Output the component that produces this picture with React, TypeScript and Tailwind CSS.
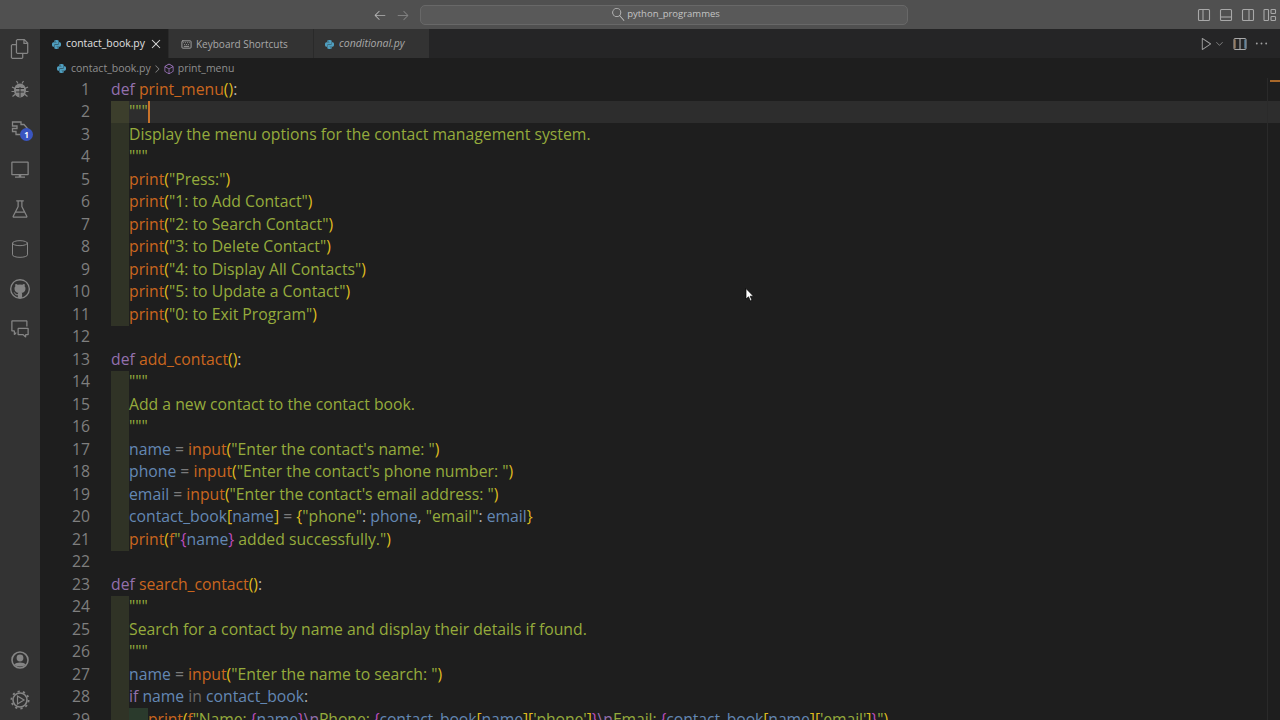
import {
  VscArrowLeft,
  VscArrowRight,
  VscChevronDown,
  VscChevronRight,
  VscClose,
  VscCommentDiscussion,
  VscEllipsis,
  VscFiles,
  VscGithub,
  VscPlay,
  VscSearch,
  VscSymbolMethod,
  VscVm,
  VscBeaker,
} from "react-icons/vsc";
import { Cylinder, Keyboard } from "lucide-react";
import { SiPython } from "react-icons/si";
import type { ReactNode } from "react";

// token colours: k=keyword f=function y=bracket s=string v=variable o=operator p=plain m=brace
const colors: Record<string, string> = {
  k: "text-[#9370ad]",
  f: "text-[#ca661e]",
  y: "text-[#dfbb1e]",
  s: "text-[#95ab3c]",
  v: "text-[#6488b4]",
  o: "text-[#7a7a7a]",
  p: "text-[#b4b4b4]",
  m: "text-[#bf4dbf]",
  g: "text-[#6a6a6a]",
};

type Tok = [string, string];

const print = (text: string): Tok[] => [["print", "f"], ["(", "y"], [text, "s"], [")", "y"]];
const docQuote: Tok[] = [['"""', "s"]];

const lines: { indent: number; toks: Tok[] }[] = [
  { indent: 0, toks: [["def ", "k"], ["print_menu", "f"], ["()", "y"], [":", "p"]] },
  { indent: 1, toks: docQuote },
  { indent: 1, toks: [["Display the menu options for the contact management system.", "s"]] },
  { indent: 1, toks: docQuote },
  { indent: 1, toks: print('"Press:"') },
  { indent: 1, toks: print('"1: to Add Contact"') },
  { indent: 1, toks: print('"2: to Search Contact"') },
  { indent: 1, toks: print('"3: to Delete Contact"') },
  { indent: 1, toks: print('"4: to Display All Contacts"') },
  { indent: 1, toks: print('"5: to Update a Contact"') },
  { indent: 1, toks: print('"0: to Exit Program"') },
  { indent: -1, toks: [] },
  { indent: 0, toks: [["def ", "k"], ["add_contact", "f"], ["()", "y"], [":", "p"]] },
  { indent: 1, toks: docQuote },
  { indent: 1, toks: [["Add a new contact to the contact book.", "s"]] },
  { indent: 1, toks: docQuote },
  { indent: 1, toks: [["name", "v"], [" = ", "o"], ["input", "f"], ["(", "y"], [`"Enter the contact's name: "`, "s"], [")", "y"]] },
  { indent: 1, toks: [["phone", "v"], [" = ", "o"], ["input", "f"], ["(", "y"], [`"Enter the contact's phone number: "`, "s"], [")", "y"]] },
  { indent: 1, toks: [["email", "v"], [" = ", "o"], ["input", "f"], ["(", "y"], [`"Enter the contact's email address: "`, "s"], [")", "y"]] },
  {
    indent: 1,
    toks: [
      ["contact_book", "v"], ["[", "y"], ["name", "v"], ["]", "y"], [" = ", "o"], ["{", "y"],
      ['"phone"', "s"], [": ", "p"], ["phone", "v"], [", ", "p"], ['"email"', "s"], [": ", "p"], ["email", "v"], ["}", "y"],
    ],
  },
  {
    indent: 1,
    toks: [
      ["print", "f"], ["(", "y"], ["f", "f"], ['"', "s"], ["{", "m"], ["name", "v"], ["}", "m"],
      [' added successfully."', "s"], [")", "y"],
    ],
  },
  { indent: -1, toks: [] },
  { indent: 0, toks: [["def ", "k"], ["search_contact", "f"], ["()", "y"], [":", "p"]] },
  { indent: 1, toks: docQuote },
  { indent: 1, toks: [["Search for a contact by name and display their details if found.", "s"]] },
  { indent: 1, toks: docQuote },
  { indent: 1, toks: [["name", "v"], [" = ", "o"], ["input", "f"], ["(", "y"], ['"Enter the name to search: "', "s"], [")", "y"]] },
  { indent: 1, toks: [["if ", "k"], ["name", "v"], [" in ", "g"], ["contact_book", "v"], [":", "p"]] },
  {
    indent: 2,
    toks: [
      ["print", "f"], ["(", "y"], ["f", "f"], ['"Name: ', "s"], ["{", "m"], ["name", "v"], ["}", "m"], ["\\n", "k"],
      ["Phone: ", "s"], ["{", "m"], ["contact_book", "v"], ["[", "y"], ["name", "v"], ["]", "y"], ["[", "y"], ["'phone'", "s"], ["]", "y"], ["}", "m"], ["\\n", "k"],
      ["Email: ", "s"], ["{", "m"], ["contact_book", "v"], ["[", "y"], ["name", "v"], ["]", "y"], ["[", "y"], ["'email'", "s"], ["]", "y"], ["}", "m"], ['"', "s"], [")", "y"],
    ],
  },
];

function PyIcon({ className }: { className?: string }) {
  return <SiPython className={className} />;
}

function CodeLine({ n, indent, toks }: { n: number; indent: number; toks: Tok[] }) {
  const active = n === 2;
  return (
    <div className="flex h-[22.5px] items-center">
      <span className="w-[50px] shrink-0 text-right text-[#7f7f7f]">{n}</span>
      <span className="w-[21px] shrink-0" />
      {indent >= 1 && <span className={`h-full w-[18px] shrink-0 ${active ? "bg-[#3c3e2c]" : "bg-[#303326]"}`} />}
      {indent >= 2 && <span className="h-full w-[19px] shrink-0 bg-[#2a3a2c]" />}
      <div className={`flex h-full flex-1 items-center whitespace-pre ${active ? "bg-[#2d2d2d]" : ""} ${n === 29 ? "tracking-[-0.09px]" : ""}`}>
        <span>
          {toks.map((t, i) => (
            <span key={i} className={colors[t[1]]}>
              {t[0]}
            </span>
          ))}
        </span>
        {active && <span className="h-full w-[2px] bg-[#c9732a]" />}
      </div>
    </div>
  );
}

function SplitIcon() {
  return (
    <svg width="14" height="14" viewBox="0 0 14 14" fill="none">
      <rect x="1" y="1.5" width="12" height="11" rx="1" stroke="#a9a9a9" />
      <path d="M7 1.5 V12.5" stroke="#b9b9b9" />
      <path d="M2 2.5 V11.5" stroke="#c79a6a" />
      <path d="M12 2.5 V11.5" stroke="#6aa6d0" />
    </svg>
  );
}

function Layout({ children }: { children: ReactNode }) {
  return (
    <svg width="14" height="14" viewBox="0 0 14 14" fill="none" stroke="#a8a8a8" strokeWidth="1.1">
      {children}
    </svg>
  );
}

function ExtensionsIcon() {
  return (
    <svg width="20" height="20" viewBox="0 0 20 20" fill="none" stroke="currentColor" strokeWidth="1.3">
      <path d="M2.5 3 H11 V5.5 H14 L17.5 9.5 V15.5 H6 V12.5 H2.5 V9.5 H7 V7 H2.5 Z" />
    </svg>
  );
}

function BugIcon() {
  return (
    <svg width="20" height="20" viewBox="0 0 20 20" fill="none" stroke="currentColor" strokeWidth="1.2">
      <path d="M6.5 2 L8 4.5 M13.5 2 L12 4.5 M2 8 L5 9.5 M18 8 L15 9.5 M1.5 12.5 H4.5 M18.5 12.5 H15.5 M2.5 17.5 L5.5 15 M17.5 17.5 L14.5 15" />
      <ellipse cx="10" cy="11.5" rx="6" ry="7" fill="currentColor" stroke="none" />
      <path d="M10 8 V18 M6 9.5 H14 M6 13 H14" stroke="#333333" strokeWidth="1" />
    </svg>
  );
}

function AccountIcon() {
  return (
    <svg width="20" height="20" viewBox="0 0 20 20" fill="none">
      <circle cx="10" cy="10" r="8" stroke="currentColor" strokeWidth="1.6" />
      <circle cx="10" cy="8" r="3.4" fill="currentColor" />
      <path d="M4.2 14.5 C6 11.8 14 11.8 15.8 14.5 C14 17 6 17 4.2 14.5 Z" fill="currentColor" />
    </svg>
  );
}

function GearIcon() {
  return (
    <svg width="20" height="20" viewBox="0 0 20 20" fill="none" stroke="currentColor">
      <circle cx="10" cy="10" r="7" strokeWidth="1.6" />
      <circle cx="10" cy="10" r="8.6" strokeWidth="1.8" strokeDasharray="2.2 3.2" />
      <path d="M7.5 6 L14 10 L7.5 14 Z" strokeWidth="1.2" />
    </svg>
  );
}

const activityTop = [
  <VscFiles key="files" />,
  <BugIcon key="bug" />,
  <div key="ext" className="relative">
    <ExtensionsIcon />
    <span className="absolute -right-[3px] top-[9px] flex h-[13px] w-[13px] items-center justify-center rounded-full bg-[#3a55c0] text-[8px] font-bold text-white">
      1
    </span>
  </div>,
  <VscVm key="vm" />,
  <VscBeaker key="beaker" />,
  <Cylinder key="db" size={20} strokeWidth={1.2} />,
  <VscGithub key="gh" />,
  <VscCommentDiscussion key="chat" />,
];

export default function App() {
  return (
    <div className="relative flex h-[720px] w-[1280px] flex-col overflow-hidden bg-[#1e1e1e] font-['Open_Sans','Noto_Sans',sans-serif]">
      {/* title bar */}
      <header className="flex h-[29px] shrink-0 items-center bg-[#505050] text-[#bdbdbd]">
        <div className="flex w-[420px] justify-end gap-[9px] pr-[10px]">
          <VscArrowLeft className="text-[14px] text-[#b5b5b5]" />
          <VscArrowRight className="text-[14px] text-[#808080]" />
        </div>
        <div className="flex h-[20px] w-[488px] items-center justify-center gap-[2px] rounded-[5px] border border-[#686868] bg-[#595959] pl-[4px] text-[9.5px] text-[#c4c4c4]">
          <VscSearch className="-scale-x-100 text-[13px]" />
          python_programmes
        </div>
        <div className="ml-auto flex gap-[8px] pr-[3px]">
          <Layout>
            <rect x="1.5" y="1.5" width="11" height="11" rx="1" />
            <path d="M6 1.5 V12.5" />
          </Layout>
          <Layout>
            <rect x="1.5" y="1.5" width="11" height="11" rx="1" />
            <path d="M1.5 9 H12.5" />
          </Layout>
          <Layout>
            <rect x="1.5" y="1.5" width="11" height="11" rx="1" />
            <path d="M8 1.5 V12.5" />
          </Layout>
          <Layout>
            <rect x="1" y="1.5" width="4.5" height="11" rx="0.8" />
            <rect x="8" y="1.5" width="4.5" height="4" rx="0.8" />
            <rect x="8" y="8.5" width="4.5" height="4" rx="0.8" />
          </Layout>
        </div>
      </header>

      <div className="flex min-h-0 flex-1">
        {/* activity bar */}
        <aside className="flex w-[40px] shrink-0 flex-col items-center bg-[#333333] text-[20px] text-[#858585]">
          <div className="flex flex-col items-center">
            {activityTop.map((icon, i) => (
              <div key={i} className="flex h-[40px] items-center justify-center">
                {icon}
              </div>
            ))}
          </div>
          <div className="mt-auto flex flex-col items-center">
            <div className="flex h-[40px] items-center justify-center">
              <AccountIcon />
            </div>
            <div className="flex h-[40px] items-center justify-center">
              <GearIcon />
            </div>
          </div>
        </aside>

        <main className="flex min-w-0 flex-1 flex-col">
          {/* tabs */}
          <div className="flex h-[29px] shrink-0 items-stretch bg-[#252526] text-[10.5px]">
            <div className="flex w-[128px] items-center bg-[#1e1e1e] pl-[12px] pt-[1px] text-[#e0e0e0]">
              <PyIcon className="mr-[5px] text-[9px] text-[#4f9fc0]" />
              <span className="text-[10.4px]">contact_book.py</span>
              <VscClose className="ml-auto mr-[4px] text-[16px] text-[#d8d8d8]" />
            </div>
            <div className="flex w-[145px] items-center border-l border-[#2a2a2a] bg-[#333333] pl-[12px] pt-[1px] text-[#a8a8a8]">
              <Keyboard size={11} className="mr-[4px]" />
              <span className="text-[10px]">Keyboard Shortcuts</span>
            </div>
            <div className="flex w-[116px] items-center border-l border-[#2a2a2a] bg-[#333333] pl-[11px] pt-[1px] italic text-[#a8a8a8]">
              <PyIcon className="mr-[5px] text-[9px] text-[#4f9fc0]" />
              <span>conditional.py</span>
            </div>
            <div className="ml-auto flex items-center pr-[11px] text-[#a0a0a0]">
              <VscPlay className="text-[15px]" />
              <VscChevronDown className="text-[11px]" />
              <span className="ml-[8px]">
                <SplitIcon />
              </span>
              <VscEllipsis className="ml-[7px] text-[15px]" />
            </div>
          </div>

          {/* breadcrumb */}
          <div className="flex h-[20px] shrink-0 items-center pl-[17px] pt-[1px] text-[10.5px] text-[#8f8f8f]">
            <PyIcon className="mr-[5px] text-[9px] text-[#4f9fc0]" />
            <span>contact_book.py</span>
            <VscChevronRight className="text-[12px]" />
            <VscSymbolMethod className="mr-[3px] text-[12px] text-[#a67bc9]" />
            <span>print_menu</span>
          </div>

          {/* editor */}
          <div className="relative min-h-0 flex-1 overflow-hidden pt-[0.4px] text-[15.75px]">
            {lines.map((l, i) => (
              <CodeLine key={i} n={i + 1} indent={l.indent} toks={l.toks} />
            ))}
            <span className="absolute right-0 top-[2px] h-[2px] w-[10px] bg-[#a8682a]" />
            <span className="absolute right-[12px] top-0 h-full w-px bg-[#2a2a2a]" />
          </div>
        </main>
      </div>

      {/* mouse pointer */}
      <svg className="absolute left-[745px] top-[288px]" width="10" height="14" viewBox="0 0 10 14">
        <path d="M1 0.5 V11 L3.5 8.8 L5.4 13 L7 12.3 L5.2 8.2 H8.5 Z" fill="#fff" stroke="#000" strokeWidth="0.7" />
      </svg>
    </div>
  );
}
